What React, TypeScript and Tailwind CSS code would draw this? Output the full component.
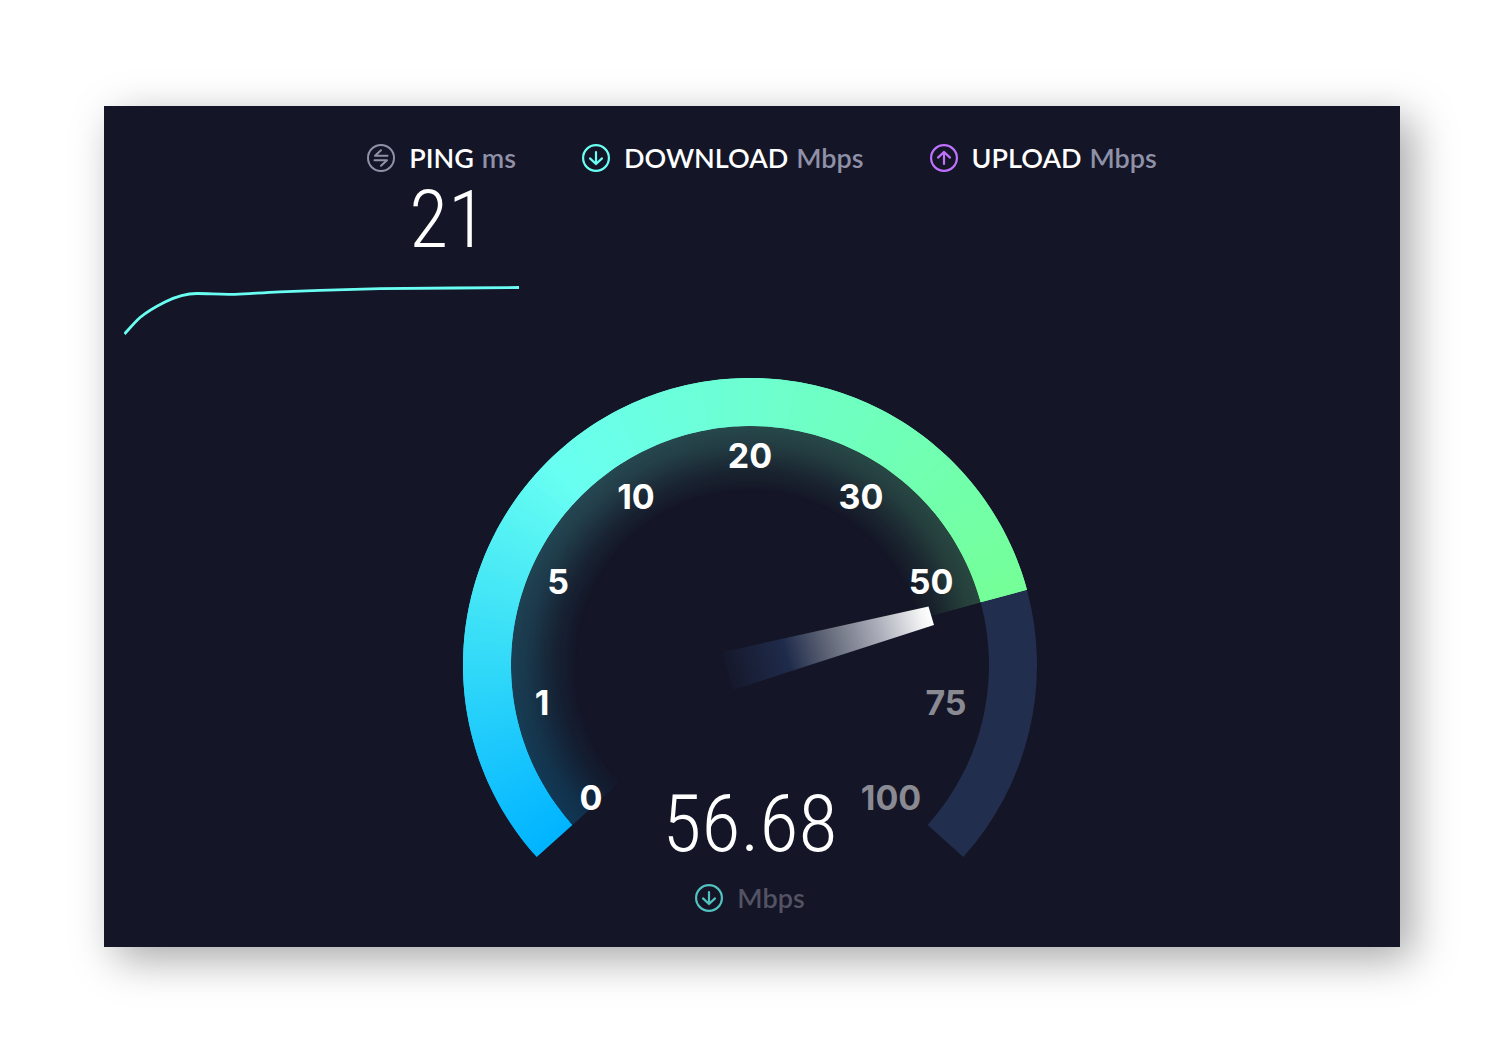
import React from 'react';

interface IconProps {
  className?: string;
}

interface MetricProps {
  label: string;
  unit: string;
  icon: React.ReactNode;
  value?: string;
}

interface Tick {
  label: string;
  x: number;
  y: number;
  reached: boolean;
}

const TICKS: Tick[] = [
  { label: '0', x: -159, y: 132, reached: true },
  { label: '1', x: -208, y: 37, reached: true },
  { label: '5', x: -192, y: -84, reached: true },
  { label: '10', x: -114, y: -169, reached: true },
  { label: '20', x: 0, y: -210, reached: true },
  { label: '30', x: 111, y: -169, reached: true },
  { label: '50', x: 181, y: -84, reached: true },
  { label: '75', x: 196, y: 37, reached: false },
  { label: '100', x: 141, y: 132, reached: false },
];

// angles in degrees, clockwise, 0 = pointing right
const START = 138;
const END = 402;
const CURRENT = 344.8;
const OUTER = 287;
const INNER = 239;
const GLOW = 172;

const STOPS: [number, number[]][] = [
  [138, [0, 180, 255]],
  [150, [14, 190, 255]],
  [180, [50, 217, 248]],
  [225, [104, 255, 242]],
  [270, [109, 255, 208]],
  [310, [113, 255, 178]],
  [345, [117, 255, 152]],
];

function colorAt(angle: number): string {
  let i = 0;
  while (i < STOPS.length - 2 && angle > STOPS[i + 1][0]) i++;
  const [a0, c0] = STOPS[i];
  const [a1, c1] = STOPS[i + 1];
  const t = Math.min(1, Math.max(0, (angle - a0) / (a1 - a0)));
  return `rgb(${c0.map((c, k) => Math.round(c + (c1[k] - c) * t)).join(',')})`;
}

function point(r: number, angle: number): string {
  const rad = (angle * Math.PI) / 180;
  return `${(r * Math.cos(rad)).toFixed(2)} ${(r * Math.sin(rad)).toFixed(2)}`;
}

function band(from: number, to: number, outer: number, inner: number): string {
  const large = to - from > 180 ? 1 : 0;
  return `M${point(outer, from)}A${outer} ${outer} 0 ${large} 1 ${point(outer, to)}L${point(inner, to)}A${inner} ${inner} 0 ${large} 0 ${point(inner, from)}Z`;
}

// each slice runs a little under the next one so no seam shows
const SLICES = Array.from({ length: Math.ceil(CURRENT - START) }, (_, i) => {
  const from = START + i;
  return { from, to: Math.min(from + 2, CURRENT), color: colorAt(from + 0.5) };
});

function PingIcon({ className }: IconProps): React.JSX.Element {
  return (
    <svg viewBox="0 0 28 28" fill="none" stroke="currentColor" strokeWidth="2" className={className} aria-hidden="true">
      <circle cx="14" cy="14" r="13" />
      <path d="M20.5 11.8H8L14 6.2" strokeLinejoin="round" strokeLinecap="round" />
      <path d="M7.500 16.200H20L14 21.800" strokeLinejoin="round" strokeLinecap="round" />
    </svg>
  );
}

function ArrowIcon({ className }: IconProps): React.JSX.Element {
  return (
    <svg viewBox="0 0 28 28" fill="none" stroke="currentColor" strokeWidth="2.2" className={className} aria-hidden="true">
      <circle cx="14" cy="14" r="12.9" />
      <path d="M14 8V20M8 14.4L14 20L20 14.4" strokeLinecap="round" />
    </svg>
  );
}

function Metric({ label, unit, icon, value }: MetricProps): React.JSX.Element {
  return (
    <div className="flex gap-3.5">
      <div className="flex h-8 items-center">{icon}</div>
      <div>
        <div className="flex h-8 items-center gap-2 text-[27px] leading-8 font-semibold">
          <span className="text-white">{label}</span>
          <span className="text-[#8f91a8]">{unit}</span>
        </div>
        <div className="mt-1.5 h-20 font-['Roboto_Condensed',Roboto,sans-serif] text-[80px] leading-20 font-light text-white">
          {value}
        </div>
      </div>
    </div>
  );
}

function SpeedLine(): React.JSX.Element {
  return (
    <svg viewBox="0 0 396 64" fill="none" className="mt-4 ml-5 h-16 w-[396px]" aria-hidden="true">
      <path
        d="M0.500 58C5 53 11 46 16 41.500C24 35 33 30 41 26C52 20.500 62 17.500 73 17.500C86 17.500 96 18.800 111 18.300C126 17.800 138 16.500 156 15.800C190 14.500 220 13.600 256 12.700C300 12.200 350 11.900 395 11.500"
        stroke="#6afff3"
        strokeWidth="2.800"
      />
    </svg>
  );
}

function Gauge(): React.JSX.Element {
  return (
    <svg viewBox="-287 -287 574 486" className="col-start-1 row-start-1 w-full" role="img" aria-label="Download speed gauge">
      <defs>
        <radialGradient id="glow" gradientUnits="userSpaceOnUse" cx="0" cy="0" r={INNER}>
          <stop offset="0.72" stopColor="#fff" stopOpacity="0" />
          <stop offset="0.82" stopColor="#fff" stopOpacity="0.07" />
          <stop offset="0.92" stopColor="#fff" stopOpacity="0.17" />
          <stop offset="1" stopColor="#fff" stopOpacity="0.22" />
        </radialGradient>
        <mask id="glow-mask" maskUnits="userSpaceOnUse" x="-287" y="-287" width="574" height="574">
          <circle r={INNER} fill="url(#glow)" />
        </mask>
        <linearGradient id="needle" gradientUnits="userSpaceOnUse" x1="-26" y1="7" x2="182" y2="-49">
          <stop offset="0" stopColor="#1f2b4b" stopOpacity="0.1" />
          <stop offset="0.3" stopColor="#1f2b4b" />
          <stop offset="0.5" stopColor="#626778" />
          <stop offset="0.75" stopColor="#adb0bb" />
          <stop offset="0.95" stopColor="#f4f4f5" />
          <stop offset="1" stopColor="#fff" />
        </linearGradient>
      </defs>
      <path d={band(CURRENT, END, OUTER, INNER)} fill="#222e4d" />
      <g mask="url(#glow-mask)">
        {SLICES.map((s) => (
          <path key={s.from} d={band(s.from, s.to, INNER, GLOW)} fill={s.color} />
        ))}
      </g>
      {SLICES.map((s) => (
        <path key={s.from} d={band(s.from, s.to, OUTER, INNER)} fill={s.color} />
      ))}
      <path d="M-27 -13L178.500 -58.500L184 -40L-17 25Z" fill="url(#needle)" />
      <g className="font-[Inter,sans-serif] text-[34px] font-bold" textAnchor="middle">
        {TICKS.map((t) => (
          <text key={t.label} x={t.x} y={t.y + 13} fill={t.reached ? '#fff' : '#8a8a92'}>
            {t.label}
          </text>
        ))}
      </g>
    </svg>
  );
}

export default function App(): React.JSX.Element {
  return (
    <div className="min-h-screen bg-white px-[104px] py-[106px] font-[Lato,sans-serif]">
      <main className="bg-[#141526] pr-1 pb-[33px] shadow-[12px_12px_40px_rgba(0,0,0,0.35)]">
        <header className="flex justify-center gap-[66px] pt-9 pl-6">
          <Metric label="PING" unit="ms" value="21" icon={<PingIcon className="size-7 text-[#8f91a8]" />} />
          <Metric label="DOWNLOAD" unit="Mbps" icon={<ArrowIcon className="size-7 text-[#6afff3]" />} />
          <Metric label="UPLOAD" unit="Mbps" icon={<ArrowIcon className="size-7 rotate-180 text-[#bf71ff]" />} />
        </header>
        <SpeedLine />
        <section className="mx-auto mt-[38px] grid max-w-[574px] items-end justify-items-center">
          <Gauge />
          <div className="col-start-1 row-start-1 font-['Roboto_Condensed',Roboto,sans-serif] text-[80px] leading-20 font-light text-white">
            56.68
          </div>
        </section>
        <div className="mt-[18px] flex h-8 items-center justify-center gap-3.5">
          <ArrowIcon className="size-7 text-[#51c2bf]" />
          <span className="text-[27px] leading-8 font-semibold text-[#535364]">Mbps</span>
        </div>
      </main>
    </div>
  );
}
